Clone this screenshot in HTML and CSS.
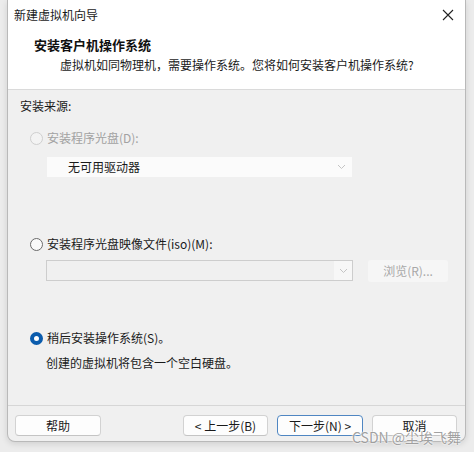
FILE: index.html
```html
<!DOCTYPE html>
<html lang="zh-CN">
<head>
<meta charset="utf-8">
<title>新建虚拟机向导</title>
<link rel="stylesheet" href="styles.css">
</head>
<body>
<div class="window">
  <div class="header">
    <div class="titlebar">
      <span class="title">新建虚拟机向导</span>
      <svg class="close" width="12" height="12" viewBox="0 0 12 12"><path d="M1 1 L11 11 M11 1 L1 11" stroke="#222" stroke-width="1.1" fill="none"/></svg>
    </div>
    <div class="heading">安装客户机操作系统</div>
    <div class="subtitle">虚拟机如同物理机，需要操作系统。您将如何安装客户机操作系统?</div>
  </div>
  <div class="content">
    <div class="group-label">安装来源:</div>
    <div class="radio-row r1 disabled"><span class="radio"></span><span>安装程序光盘(D):</span></div>
    <div class="select s1"><span class="select-text">无可用驱动器</span><svg class="chev" width="9" height="6" viewBox="0 0 9 6"><path d="M1 1 L4.5 4.5 L8 1" stroke="#c4c4c4" stroke-width="1" fill="none"/></svg></div>
    <div class="radio-row r2"><span class="radio"></span><span>安装程序光盘映像文件(iso)(M):</span></div>
    <div class="combo-row">
      <div class="combo"><span class="combo-field"></span><span class="combo-arrow"><svg width="9" height="6" viewBox="0 0 9 6"><path d="M1 1 L4.5 4.5 L8 1" stroke="#c4c4c4" stroke-width="1" fill="none"/></svg></span></div>
      <div class="browse">浏览(R)...</div>
    </div>
    <div class="radio-row r3"><span class="radio checked"></span><span>稍后安装操作系统(S)。</span></div>
    <div class="desc">创建的虚拟机将包含一个空白硬盘。</div>
  </div>
  <div class="footer">
    <div class="btn help">帮助</div>
    <div class="nav">
      <div class="btn">&lt; 上一步(B)</div>
      <div class="btn primary">下一步(N) &gt;</div>
      <div class="btn cancel">取消</div>
    </div>
  </div>
</div>
<div class="watermark">CSDN @尘埃飞舞</div>
</body>
</html>
```
FILE: styles.css
```css
html, body {
  margin: 0;
  padding: 0;
}
body {
  width: 474px;
  height: 452px;
  background: #ececec;
  font-family: "Noto Sans CJK SC", "Noto Sans", sans-serif;
  font-size: 12px;
  color: #1a1a1a;
  position: relative;
  overflow: hidden;
}
.window {
  position: relative;
  margin-left: 7px;
  width: 457px;
  height: 441px;
  border: 1px solid #b9b9b9;
  border-top: none;
  border-radius: 0 0 8px 8px;
  background: #f0f0f0;
  box-shadow: 0 2px 6px rgba(0,0,0,0.12);
  display: flex;
  flex-direction: column;
  overflow: hidden;
}
.header {
  background: #ffffff;
  height: 89px;
  border-bottom: 1px solid #dadada;
  box-sizing: content-box;
}
.titlebar {
  height: 30px;
  display: flex;
  align-items: center;
  justify-content: space-between;
  padding: 0 10px 0 6px;
  line-height: 30px;
}
.title {
  font-size: 12px;
  color: #1a1a1a;
}
.close {
  display: block;
  margin-right: 1px;
}
.heading {
  margin-top: 6px;
  padding-left: 26px;
  font-size: 13px;
  font-weight: bold;
  line-height: 18px;
  color: #111;
}
.subtitle {
  margin-top: 1px;
  padding-left: 52px;
  line-height: 19px;
  font-size: 12px;
}
.content {
  height: 316px;
  padding-left: 12px;
  padding-top: 7px;
  box-sizing: border-box;
  border-bottom: 1px solid #d6d6d6;
  display: flex;
  flex-direction: column;
  align-items: flex-start;
}
.group-label {
  line-height: 18px;
}
.radio-row {
  display: flex;
  align-items: center;
  gap: 4px;
  margin-left: 10px;
  line-height: 18px;
}
.radio-row.disabled {
  color: #a2a2a2;
}
.r1 { margin-top: 14px; }
.r2 { margin-top: 58px; }
.r3 { margin-top: 47px; }
.radio {
  width: 11px;
  height: 11px;
  border: 1px solid #6a6a6a;
  border-radius: 50%;
  background: #fafafa;
  box-sizing: content-box;
}
.disabled .radio {
  border-color: #cfcfcf;
  background: #f3f3f3;
}
.radio.checked {
  width: 5px;
  height: 5px;
  border: 4px solid #0b5cad;
  background: #ffffff;
}
.select {
  margin-top: 10px;
  margin-left: 27px;
  width: 305px;
  height: 20px;
  background: #fbfbfb;
  display: flex;
  align-items: center;
  justify-content: space-between;
  box-sizing: border-box;
  padding: 0 6px 0 21px;
}
.select-text {
  line-height: 18px;
  color: #1a1a1a;
}
.chev {
  display: block;
}
.combo-row {
  margin-top: 7px;
  margin-left: 26px;
  display: flex;
  align-items: flex-start;
  gap: 15px;
}
.combo {
  width: 307px;
  height: 21px;
  box-sizing: border-box;
  border: 1px solid #cdcdcd;
  background: #f0f0f0;
  display: flex;
}
.combo-field {
  flex: 1;
}
.combo-arrow {
  width: 18px;
  background: #f7f7f7;
  display: flex;
  align-items: center;
  justify-content: center;
}
.combo-arrow svg {
  display: block;
}
.browse {
  width: 80px;
  height: 22px;
  background: #f6f6f6;
  color: #a8a8a8;
  text-align: center;
  line-height: 22px;
  border-radius: 3px;
}
.desc {
  margin-top: 7px;
  margin-left: 26px;
  line-height: 18px;
}
.footer {
  flex: 1;
  display: flex;
  justify-content: space-between;
  align-items: flex-start;
  padding: 9px 8px 0 7px;
}
.nav {
  display: flex;
  gap: 9px;
}
.btn {
  width: 85px;
  height: 21px;
  box-sizing: border-box;
  border: 1px solid #d2d2d2;
  border-bottom-color: #c4c4c4;
  border-radius: 4px;
  background: #fdfdfd;
  text-align: center;
  line-height: 19px;
  font-size: 12px;
  color: #1a1a1a;
}
.btn.help { width: 86px; }
.btn.primary {
  width: 86px;
  border-color: #4f86c2;
}
.watermark {
  position: absolute;
  left: 352px;
  top: 427px;
  font-size: 14px;
  line-height: 20px;
  color: rgba(130,130,130,0.75);
  text-shadow: 0 0 2px #fff, 0 0 2px #fff;
  font-family: "Noto Sans CJK SC", "Noto Sans", sans-serif;
}
```
